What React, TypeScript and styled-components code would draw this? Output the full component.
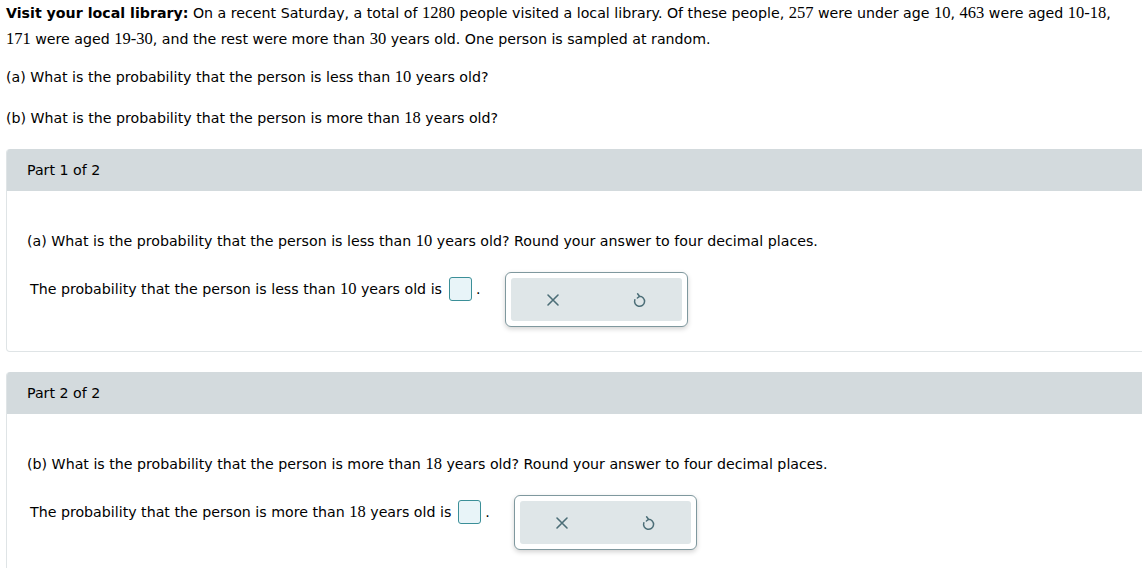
import React from 'react';
import styled, { createGlobalStyle } from 'styled-components';

const GlobalStyle = createGlobalStyle`
	body {
		margin: 0;
		background: #fff;
		color: #000;
		font-family: "DejaVu Sans", Verdana, sans-serif;
		font-size: 14.2px;
		overflow: hidden;
	}
`;

const Page = styled.div`
	width: 1160px;
	padding: 0 0 0 6px;
`;

const Intro = styled.p`
	margin: 0;
	width: 1122px;
	line-height: 25px;
`;

const Question = styled.p`
	margin: ${(p: { top: number }) => p.top}px 0 0 0;
	line-height: 24px;
`;

const Num = styled.span`
	font-family: "Liberation Serif", "Times New Roman", serif;
	font-size: 16.5px;
`;

const Panel = styled.section`
	margin-top: ${(p: { top: number }) => p.top}px;
	border: 1px solid #dfe4e6;
	border-top: none;
	border-radius: 4px 0 0 4px;
	overflow: hidden;
`;

const PanelHeader = styled.div`
	background: #d3dadd;
	height: 42px;
	display: flex;
	align-items: center;
	padding-left: 20px;
`;

const PanelBody = styled.div`
	padding: 38px 0 24px 20px;
`;

const AnswerRow = styled.div`
	display: flex;
	align-items: flex-start;
	margin-top: 19px;
	padding-left: 3px;
`;

const AnswerText = styled.div`
	display: flex;
	align-items: center;
	line-height: 24px;
	padding-top: 5px;
`;

const InputBox = styled.span`
	display: inline-block;
	width: 21px;
	height: 22px;
	margin-left: 7px;
	border: 1.5px solid #3b8f98;
	border-radius: 3px;
	background: #e8f4f8;
`;

const Dot = styled.span`
	margin: 0 24px 0 4px;
`;

const ToolFrame = styled.div`
	width: 171px;
	padding: 5px;
	border: 1px solid #7f989e;
	border-radius: 6px;
	background: #fff;
	box-shadow: 0 2px 5px rgba(0, 0, 0, 0.18);
`;

const ToolInner = styled.div`
	height: 43px;
	background: #dfe6e8;
	border-radius: 3px;
	display: flex;
	align-items: center;
	justify-content: space-between;
	padding: 0 30px;
`;

const ToolButton = styled.button`
	border: none;
	background: transparent;
	padding: 0;
	width: 24px;
	height: 24px;
	display: flex;
	align-items: center;
	justify-content: center;
	cursor: pointer;
`;

const ClearIcon = () => (
	<svg width="14" height="14" viewBox="0 0 14 14">
		<path d="M2 2 L12 12 M12 2 L2 12" stroke="#4c6e77" strokeWidth="1.6" fill="none" strokeLinecap="round" />
	</svg>
);

const UndoIcon = () => (
	<svg width="15" height="17" viewBox="0 0 14 16">
		<path d="M5.2 2.6 L7 5 L5 6.6 M7 5 A4.7 4.7 0 1 1 2.6 8.2" stroke="#4c6e77" strokeWidth="1.4" fill="none" strokeLinecap="round" strokeLinejoin="round" />
	</svg>
);

function Part(props: { index: number; top: number; letter: string; phrase: string; age: number }) {
	return <Panel top={props.top}>
	         <PanelHeader>Part {props.index} of 2</PanelHeader>
	         <PanelBody>
	           <Question top={0}>
	             ({props.letter}) What is the probability that the person is {props.phrase} <Num>{props.age}</Num> years old? Round your answer to four decimal places.
	           </Question>
	           <AnswerRow>
	             <AnswerText>
	               The probability that the person is {props.phrase}&nbsp;<Num>{props.age}</Num>&nbsp;years old is
	               <InputBox />
	               <Dot>.</Dot>
	             </AnswerText>
	             <ToolFrame>
	               <ToolInner>
	                 <ToolButton aria-label="Clear"><ClearIcon /></ToolButton>
	                 <ToolButton aria-label="Undo"><UndoIcon /></ToolButton>
	               </ToolInner>
	             </ToolFrame>
	           </AnswerRow>
	         </PanelBody>
	       </Panel>;
}

export default function App() {
	return <>
	         <GlobalStyle />
	         <Page>
	           <Intro>
	             <b>Visit your local library:</b> On a recent Saturday, a total of <Num>1280</Num> people visited a local library. Of these people, <Num>257</Num> were under age <Num>10</Num>, <Num>463</Num> were aged <Num>10-18</Num>, <Num>171</Num> were aged <Num>19-30</Num>, and the rest were more than <Num>30</Num> years old. One person is sampled at random.
	           </Intro>
	           <Question top={13}>(a) What is the probability that the person is less than <Num>10</Num> years old?</Question>
	           <Question top={17}>(b) What is the probability that the person is more than <Num>18</Num> years old?</Question>
	           <Part index={1} top={19} letter="a" phrase="less than" age={10} />
	           <Part index={2} top={20} letter="b" phrase="more than" age={18} />
	         </Page>
	       </>;
}
